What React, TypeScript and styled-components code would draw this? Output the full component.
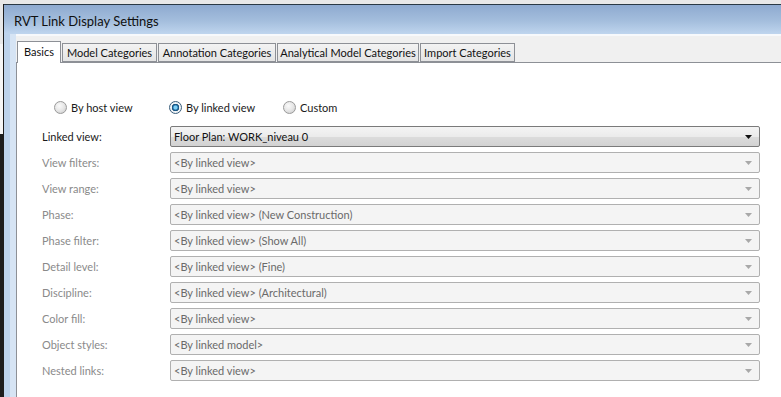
import React from "react";
import styled, { createGlobalStyle } from "styled-components";

const GlobalStyle = createGlobalStyle`
  html, body { margin: 0; padding: 0; }
  body {
    width: 781px; height: 397px; overflow: hidden;
    background: #e4e4e4;
    font-family: Lato, "Open Sans", "DejaVu Sans", sans-serif;
  }
`;

const Screen = styled.div`
  width: 781px;
  height: 397px;
  display: flex;
  flex-direction: column;
  overflow: hidden;
  background: #e6e6e6;
`;

const TopGap = styled.div`
  height: 4px;
  flex: none;
  background: #e8e8e8;
`;

const Desk = styled.div`
  flex: 1;
  display: flex;
  min-height: 0;
`;

const BgWindow = styled.div`
  width: 3px;
  flex: none;
  background: linear-gradient(to bottom, #e8e8e8 0 40px, #f6f6f6 40px 130px, #1d1d1d 130px);
  border-right: 1px solid #1d1d1d;
`;

const Dialog = styled.div`
  flex: 1;
  display: flex;
  flex-direction: column;
  border-top: 1px solid #2a3945;
  min-width: 0;
`;

const TitleBar = styled.div`
  box-sizing: border-box;
  height: 29px;
  flex: none;
  display: flex;
  align-items: center;
  padding: 3px 0 0 10px;
  background: linear-gradient(to bottom, #8eaad0 0%, #a4bedd 55%, #bfd5ee 100%);
  font-size: 13px;
  color: #101010;
`;

const Body = styled.div`
  flex: 1;
  display: flex;
  min-height: 0;
`;

const Frame = styled.div`
  width: 12px;
  flex: none;
  background: linear-gradient(to right, #bdd3ec 0 6px, #d6e4f4 6px 12px);
`;

const Client = styled.div`
  flex: 1;
  display: flex;
  flex-direction: column;
  background: #f0f0f0;
  border-top: 2px solid #f7f9fc;
  padding-top: 5px;
  min-width: 0;
`;

const TabStrip = styled.div`
  display: flex;
  align-items: flex-end;
  height: 21px;
  padding-left: 1px;
  flex: none;
  position: relative;
  z-index: 1;
`;

const Tab = styled.div<{ $active?: boolean; $w: number }>`
  box-sizing: border-box;
  width: ${(p) => p.$w}px;
  height: ${(p) => (p.$active ? 22 : 19)}px;
  margin-bottom: ${(p) => (p.$active ? -1 : 0)}px;
  margin-right: 1px;
  display: flex;
  align-items: center;
  justify-content: center;
  font-size: 11px;
  color: #111;
  white-space: nowrap;
  border: 1px solid #8d9096;
  border-bottom: ${(p) => (p.$active ? "none" : "1px solid #8d9096")};
  background: ${(p) =>
    p.$active ? "#ffffff" : "linear-gradient(to bottom, #f3f3f3, #e4e4e4)"};
  padding-bottom: ${(p) => (p.$active ? 2 : 0)}px;
`;

const Panel = styled.div`
  flex: 1;
  background: #ffffff;
  border-top: 1px solid #8d9096;
  border-left: 1px solid #8d9096;
  padding: 36px 0 0 0;
`;

const RadioRow = styled.div`
  display: flex;
  align-items: center;
  height: 16px;
  padding-left: 37px;
`;

const RadioItem = styled.label<{ $w: number }>`
  width: ${(p) => p.$w}px;
  display: flex;
  align-items: center;
  gap: 4px;
  font-size: 11px;
  color: #1a1a1a;
`;

const RadioCircle = styled.span<{ $on?: boolean }>`
  box-sizing: border-box;
  width: 13px;
  height: 13px;
  border-radius: 50%;
  border: 1px solid ${(p) => (p.$on ? "#3b5f7d" : "#9a9a9a")};
  background: ${(p) =>
    p.$on
      ? "radial-gradient(circle at 50% 50%, #7fd0f5 0 1.5px, #1f6fa8 2.5px, #164a72 3.5px, #eef2f5 4px)"
      : "radial-gradient(circle at 40% 35%, #fafafa 0, #e6e6e6 50%, #c8c8c8 100%)"};
  flex: none;
`;

const Form = styled.div`
  margin-top: 11px;
  display: grid;
  grid-template-columns: 128px 590px;
  grid-auto-rows: 21px;
  row-gap: 5px;
  padding-left: 25px;
  align-items: center;
`;

const Label = styled.div<{ $on?: boolean }>`
  font-size: 11px;
  color: ${(p) => (p.$on ? "#1a1a1a" : "#8a8a8a")};
  white-space: nowrap;
`;

const Select = styled.div<{ $on?: boolean }>`
  box-sizing: border-box;
  height: 21px;
  display: flex;
  align-items: center;
  justify-content: space-between;
  padding: 0 7px 0 3px;
  border-radius: 2px;
  border: 1px solid ${(p) => (p.$on ? "#7a7a7a" : "#b0b0b0")};
  background: ${(p) =>
    p.$on ? "linear-gradient(to bottom, #f4f4f4 0%, #ebebeb 50%, #dcdcdc 51%, #d2d2d2 100%)" : "#f4f4f4"};
  font-size: 11px;
  color: ${(p) => (p.$on ? "#111" : "#6a6a6a")};
  white-space: nowrap;
`;

const Arrow = styled.svg`
  flex: none;
`;

const tabs: [string, number, boolean][] = [
  ["Basics", 44, true],
  ["Model Categories", 95, false],
  ["Annotation Categories", 118, false],
  ["Analytical Model Categories", 142, false],
  ["Import Categories", 95, false],
];

const rows: [string, string, boolean][] = [
  ["Linked view:", "Floor Plan: WORK_niveau 0", true],
  ["View filters:", "<By linked view>", false],
  ["View range:", "<By linked view>", false],
  ["Phase:", "<By linked view> (New Construction)", false],
  ["Phase filter:", "<By linked view> (Show All)", false],
  ["Detail level:", "<By linked view> (Fine)", false],
  ["Discipline:", "<By linked view> (Architectural)", false],
  ["Color fill:", "<By linked view>", false],
  ["Object styles:", "<By linked model>", false],
  ["Nested links:", "<By linked view>", false],
];

export default function App() {
  return (
    <>
      <GlobalStyle />
      <Screen>
        <TopGap />
        <Desk>
          <BgWindow />
          <Dialog>
            <TitleBar>RVT Link Display Settings</TitleBar>
            <Body>
              <Frame />
              <Client>
                <TabStrip>
                  {tabs.map(([t, w, a]) => (
                    <Tab key={t} $w={w} $active={a}>
                      {t}
                    </Tab>
                  ))}
                </TabStrip>
                <Panel>
                  <RadioRow>
                    <RadioItem $w={115}>
                      <RadioCircle />
                      By host view
                    </RadioItem>
                    <RadioItem $w={114}>
                      <RadioCircle $on />
                      By linked view
                    </RadioItem>
                    <RadioItem $w={100}>
                      <RadioCircle />
                      Custom
                    </RadioItem>
                  </RadioRow>
                  <Form>
                    {rows.map(([l, v, on]) => (
                      <React.Fragment key={l}>
                        <Label $on={on}>{l}</Label>
                        <Select $on={on}>
                          <span>{v}</span>
                          <Arrow width="7" height="4" viewBox="0 0 7 4">
                            <path d="M0 0H7L3.5 4Z" fill={on ? "#111" : "#a8a8a8"} />
                          </Arrow>
                        </Select>
                      </React.Fragment>
                    ))}
                  </Form>
                </Panel>
              </Client>
            </Body>
          </Dialog>
        </Desk>
      </Screen>
    </>
  );
}
